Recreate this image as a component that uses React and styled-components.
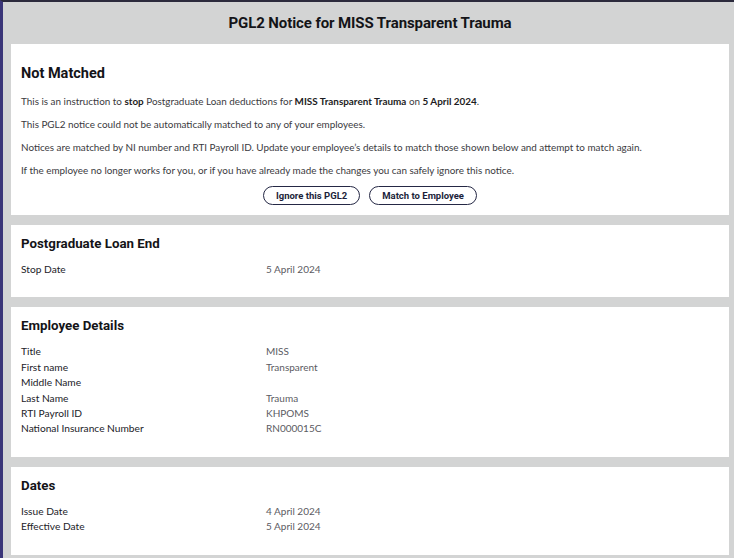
import React from "react";
import styled, { createGlobalStyle } from "styled-components";

const GlobalStyle = createGlobalStyle`
  html, body {
    margin: 0;
    padding: 0;
    background: #d3d4d4;
  }
  body {
    font-family: Lato, "Open Sans", sans-serif;
    color: #2f2f33;
  }
`;

const Page = styled.div`
  min-height: 100vh;
  box-sizing: border-box;
  border-top: 2px solid #2b2a3c;
  border-left: 3px solid #3a3578;
  padding: 0 5px 4px 8px;
  background: #d3d4d4;
`;

const Header = styled.header`
  height: 42px;
  display: flex;
  align-items: center;
  justify-content: center;
`;

const Title = styled.h1`
  margin: 0;
  font-family: Roboto, "Liberation Sans", sans-serif;
  font-weight: 700;
  font-size: 15px;
  letter-spacing: -0.1px;
  color: #141418;
`;

const Stack = styled.div`
  display: flex;
  flex-direction: column;
  gap: 10px;
`;

const Card = styled.section`
  background: #ffffff;
  padding: ${(p) => (p.$lead ? "21px 10px 10px" : "10px 10px 20px")};
`;

const SectionTitle = styled.h2`
  margin: 0 0 ${(p) => (p.$lead ? "10px" : "9px")};
  font-family: Roboto, "Liberation Sans", sans-serif;
  font-weight: 700;
  font-size: ${(p) => (p.$lead ? "14.5px" : "13.3px")};
  line-height: 18px;
  color: #141418;
`;

const Para = styled.p`
  margin: 0 0 7px;
  font-size: 9.9px;
  line-height: 16px;
  color: #3a3a40;

  b {
    font-weight: 700;
    color: #1c1c22;
  }
`;

const Actions = styled.div`
  display: flex;
  justify-content: center;
  gap: 9px;
  margin-top: 8px;
`;

const PillButton = styled.button`
  height: 19px;
  padding: 0 12px;
  border: 1px solid #252845;
  border-radius: 10px;
  background: #ffffff;
  font-family: Roboto, "Liberation Sans", sans-serif;
  font-weight: 700;
  font-size: 9.5px;
  color: #1c1f3a;
  cursor: pointer;
`;

const Rows = styled.dl`
  margin: 0;
  display: grid;
  grid-template-columns: 245px 1fr;
  font-size: 10.2px;
  line-height: 15.4px;
`;

const Label = styled.dt`
  margin: 0;
  color: #222228;
`;

const Value = styled.dd`
  margin: 0;
  color: #5b5b62;
  font-size: 10px;
  min-height: 15.4px;
`;

const DetailCard = ({ title, rows }) => (
  <Card>
    <SectionTitle>{title}</SectionTitle>
    <Rows>
      {rows.map(([label, value]) => (
        <React.Fragment key={label}>
          <Label>{label}</Label>
          <Value>{value}</Value>
        </React.Fragment>
      ))}
    </Rows>
  </Card>
);

const App = () => (
  <>
    <GlobalStyle />
    <Page>
      <Header>
        <Title>PGL2 Notice for MISS Transparent Trauma</Title>
      </Header>
      <Stack>
        <Card $lead>
          <SectionTitle $lead>Not Matched</SectionTitle>
          <Para>
            This is an instruction to <b>stop</b> Postgraduate Loan deductions
            for <b>MISS Transparent Trauma</b> on <b>5 April 2024</b>.
          </Para>
          <Para>
            This PGL2 notice could not be automatically matched to any of your
            employees.
          </Para>
          <Para>
            Notices are matched by NI number and RTI Payroll ID. Update your
            employee’s details to match those shown below and attempt to match
            again.
          </Para>
          <Para>
            If the employee no longer works for you, or if you have already made
            the changes you can safely ignore this notice.
          </Para>
          <Actions>
            <PillButton>Ignore this PGL2</PillButton>
            <PillButton>Match to Employee</PillButton>
          </Actions>
        </Card>
        <DetailCard
          title="Postgraduate Loan End"
          rows={[["Stop Date", "5 April 2024"]]}
        />
        <DetailCard
          title="Employee Details"
          rows={[
            ["Title", "MISS"],
            ["First name", "Transparent"],
            ["Middle Name", ""],
            ["Last Name", "Trauma"],
            ["RTI Payroll ID", "KHPOMS"],
            ["National Insurance Number", "RN000015C"],
          ]}
        />
        <DetailCard
          title="Dates"
          rows={[
            ["Issue Date", "4 April 2024"],
            ["Effective Date", "5 April 2024"],
          ]}
        />
      </Stack>
    </Page>
  </>
);

export default App;
